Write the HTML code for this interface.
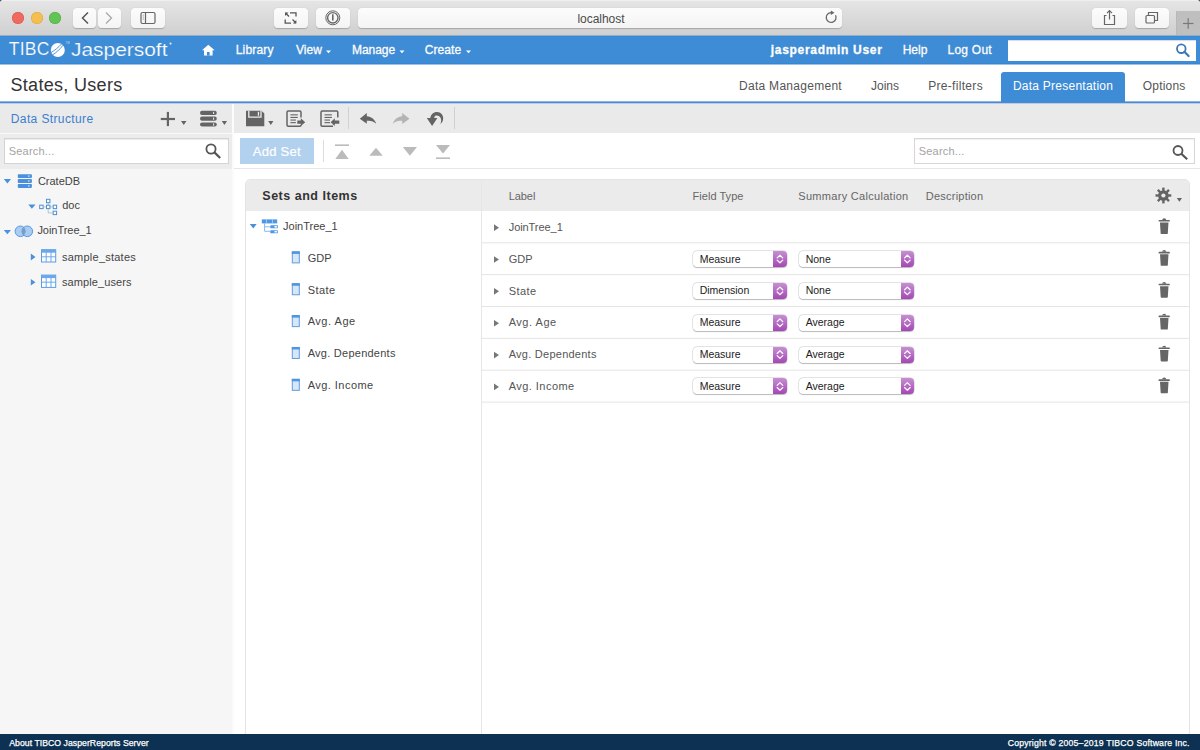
<!DOCTYPE html>
<html><head><meta charset="utf-8"><title>States, Users</title>
<style>
*{margin:0;padding:0;box-sizing:border-box}
html,body{width:1200px;height:750px;overflow:hidden;background:#fff;font-family:"Liberation Sans",sans-serif}
body{position:relative}
.a{position:absolute}
.t{position:absolute;white-space:nowrap;line-height:1}
svg{overflow:visible}
</style></head><body>
<div class="a" style="left:0;top:0;width:1200px;height:35px;background:linear-gradient(#efefef 0,#efefef 1px,#e5e5e5 1px,#d0d0d0 34px);"></div>
<div class="a" style="left:0;top:34px;width:1200px;height:1px;background:#d3d0cc"></div>
<div class="a" style="left:12px;top:12px;width:12px;height:12px;border-radius:50%;background:#ee6a5f;box-shadow:inset 0 0 0 0.5px #d9544a"></div>
<div class="a" style="left:30.5px;top:12px;width:12px;height:12px;border-radius:50%;background:#f5bf4f;box-shadow:inset 0 0 0 0.5px #dba440"></div>
<div class="a" style="left:49.3px;top:12px;width:12px;height:12px;border-radius:50%;background:#62c454;box-shadow:inset 0 0 0 0.5px #52a842"></div>
<div class="a" style="left:73px;top:8px;width:23px;height:20px;border-radius:4px;background:linear-gradient(#fcfcfc,#f4f4f4);box-shadow:0 0.5px 1px rgba(0,0,0,.22)"></div>
<div class="a" style="left:98px;top:8px;width:23px;height:20px;border-radius:4px;background:linear-gradient(#fcfcfc,#f4f4f4);box-shadow:0 0.5px 1px rgba(0,0,0,.22)"></div>
<div class="a" style="left:131px;top:8px;width:34px;height:20px;border-radius:4px;background:linear-gradient(#fcfcfc,#f4f4f4);box-shadow:0 0.5px 1px rgba(0,0,0,.22)"></div>
<div class="a" style="left:274px;top:8px;width:34px;height:20px;border-radius:4px;background:linear-gradient(#fcfcfc,#f4f4f4);box-shadow:0 0.5px 1px rgba(0,0,0,.22)"></div>
<div class="a" style="left:316px;top:8px;width:34px;height:20px;border-radius:4px;background:linear-gradient(#fcfcfc,#f4f4f4);box-shadow:0 0.5px 1px rgba(0,0,0,.22)"></div>
<div class="a" style="left:358px;top:8px;width:484px;height:20px;border-radius:4px;background:linear-gradient(#fcfcfc,#f4f4f4);box-shadow:0 0.5px 1px rgba(0,0,0,.22)"></div>
<div class="a" style="left:1092px;top:8px;width:35px;height:20px;border-radius:4px;background:linear-gradient(#fcfcfc,#f4f4f4);box-shadow:0 0.5px 1px rgba(0,0,0,.22)"></div>
<div class="a" style="left:1135px;top:8px;width:34px;height:20px;border-radius:4px;background:linear-gradient(#fcfcfc,#f4f4f4);box-shadow:0 0.5px 1px rgba(0,0,0,.22)"></div>
<div class="a" style="left:1176px;top:11px;width:24px;height:24px;background:#bfbfbf;border-left:1px solid #b8b8b8"></div>
<svg class="a" style="left:0;top:0" width="1200" height="35" viewBox="0 0 1200 35">
<polyline points="88,12.5 82.5,18 88,23.5" fill="none" stroke="#555" stroke-width="1.5"/>
<polyline points="106,12.5 111.5,18 106,23.5" fill="none" stroke="#a8a8a8" stroke-width="1.3"/>
<rect x="141" y="12.5" width="14" height="11" rx="1.5" fill="none" stroke="#666" stroke-width="1.2"/>
<line x1="145.5" y1="12.5" x2="145.5" y2="23.5" stroke="#666" stroke-width="1.2"/>
<circle cx="143.2" cy="15" r=".5" fill="#666"/><circle cx="143.2" cy="17" r=".5" fill="#666"/><circle cx="143.2" cy="19" r=".5" fill="#666"/>
<g stroke="#555" stroke-width="1.3" fill="none">
<polyline points="290,12.8 296,12.8 296,16.5"/><polyline points="285.2,19.5 285.2,23.2 291,23.2"/>
<line x1="285.5" y1="13" x2="289" y2="16.5"/><line x1="292.5" y1="19.5" x2="296" y2="23"/>
</g>
<polygon points="285,12.5 288.5,12.5 285,16" fill="#555"/><polygon points="296.3,23.5 292.8,23.5 296.3,20" fill="#555"/>
<circle cx="332.8" cy="17.8" r="7" fill="none" stroke="#666" stroke-width="1"/>
<circle cx="332.8" cy="17.8" r="5.2" fill="none" stroke="#666" stroke-width="1.4"/>
<line x1="332.8" y1="14.3" x2="332.8" y2="20.5" stroke="#666" stroke-width="1.6"/>
<path d="M835.5,15.2 A4.9,4.9 0 1 1 831,12.6" fill="none" stroke="#666" stroke-width="1.3"/>
<polygon points="830.8,10.6 834.5,12.8 830.8,15" fill="#666"/>
<g stroke="#666" stroke-width="1.2" fill="none">
<polyline points="1106.5,15.5 1104.5,15.5 1104.5,24.5 1114.5,24.5 1114.5,15.5 1112.5,15.5"/>
<line x1="1109.5" y1="11" x2="1109.5" y2="19.5"/>
<polyline points="1107,13.2 1109.5,10.7 1112,13.2"/>
<rect x="1146" y="15.5" width="8.5" height="7.5" rx="1"/>
<polyline points="1148.5,15.5 1148.5,12.5 1157.5,12.5 1157.5,20.5 1154.5,20.5"/>
<line x1="1183" y1="23.5" x2="1193.5" y2="23.5" stroke="#7a787a"/>
<line x1="1188.2" y1="18.2" x2="1188.2" y2="28.8" stroke="#7a787a"/>
</g>
<path d="M0,0 h2.6 a2.6,2.6 0 0 0 -2.6,2.6z" fill="#1b2b3b" opacity=".9"/>
<path d="M1200,0 h-2.6 a2.6,2.6 0 0 1 2.6,2.6z" fill="#1b2b3b" opacity=".9"/>
</svg>
<div class="a" style="left:0;top:35px;width:1200px;height:30px;background:linear-gradient(#93aecb 0,#93aecb 1px,#3489d8 1px,#3489d8 2px,#3e8cd6 2px,#3e8cd6 28px,#3487d4 28px,#3487d4 29px,#9cc2ea 29px)"></div>
<div class="a" style="left:1008px;top:40px;width:188px;height:21px;background:#fff;box-shadow:inset 0 1px 1px rgba(0,0,0,.15)"></div>
<svg class="a" style="left:0;top:35px" width="1200" height="30" viewBox="0 35 1200 30">
<circle cx="57.8" cy="50" r="7" fill="#fff"/>
<path d="M51,52.6 C54.5,50.5 58.5,47.5 61.8,43.6" fill="none" stroke="#3e8cd6" stroke-width=".9"/>
<path d="M52.3,55 C56,52.8 59.8,49.5 63.2,45" fill="none" stroke="#3e8cd6" stroke-width=".9"/>
<text x="65.8" y="44.3" font-size="2.6" fill="#fff" opacity=".7" font-family="Liberation Sans">TM</text>
<circle cx="170.6" cy="43.6" r="1.1" fill="#fff" opacity=".8"/>
<polygon points="208.3,44.8 202,50.2 204,50.2 204,55.6 212.6,55.6 212.6,50.2 214.6,50.2" fill="#fff"/>
<rect x="207" y="52" width="2.6" height="3.6" fill="#3e8cd6"/>
<polygon points="326,50.5 331,50.5 328.5,53.3" fill="#fff"/>
<polygon points="399.5,50.5 404.5,50.5 402,53.3" fill="#fff"/>
<polygon points="466,50.5 471,50.5 468.5,53.3" fill="#fff"/>
<circle cx="1181.3" cy="48.7" r="4.3" fill="none" stroke="#3b78b8" stroke-width="1.8"/>
<line x1="1184.4" y1="51.8" x2="1188.6" y2="56" stroke="#3b78b8" stroke-width="2.2" stroke-linecap="round"/>
</svg>
<div class="a" style="left:0;top:101px;width:1200px;height:3px;background:linear-gradient(#8db6e6 0,#8db6e6 1px,#4a8ad6 1px,#4a8ad6 2px,#bccbdd 2px)"></div>
<div class="a" style="left:1001px;top:71.5px;width:124px;height:30px;background:#3e8cd6;border-radius:3px 3px 0 0"></div>
<div class="a" style="left:0;top:104px;width:232px;height:29px;background:#eaeaea"></div>
<div class="a" style="left:0;top:133px;width:232px;height:1px;background:#fafafa"></div>
<div class="a" style="left:0;top:134px;width:232px;height:34.5px;background:#ececec"></div>
<div class="a" style="left:0;top:168.5px;width:232.5px;height:565px;background:#f6f6f6"></div>
<div class="a" style="left:232px;top:104px;width:2px;height:630px;background:#fbfbfb"></div>
<div class="a" style="left:4px;top:138px;width:224.5px;height:26px;background:#fff;border:1px solid #d4d4d4;box-shadow:inset 0 1px 1px rgba(0,0,0,.08)"></div>
<svg class="a" style="left:0;top:103px" width="232" height="200" viewBox="0 103 232 200">
<g fill="#646464">
<rect x="160.8" y="117.9" width="14.2" height="2.2"/>
<rect x="166.8" y="111.9" width="2.2" height="14.2"/>
<polygon points="181,121 186.5,121 183.75,125"/>
<polygon points="221.8,121 227,121 224.4,125"/>
<rect x="200" y="110.8" width="16.8" height="4.2" rx="2.1"/>
<rect x="200" y="116.6" width="16.8" height="4.2" rx="2.1"/>
<rect x="200" y="122.4" width="16.8" height="4.2" rx="2.1"/>
</g>
<g fill="#fff"><rect x="213.2" y="111.8" width=".9" height="2.2"/><rect x="213.2" y="117.6" width=".9" height="2.2"/><rect x="213.2" y="123.4" width=".9" height="2.2"/></g>
<circle cx="211" cy="149" r="4.6" fill="none" stroke="#555" stroke-width="1.8"/>
<line x1="214.4" y1="152.4" x2="220.2" y2="158" stroke="#555" stroke-width="2.2"/>
<g fill="#4a90dc">
<polygon points="3.8,179 11,179 7.4,183.4"/>
<polygon points="28.3,204.5 35.5,204.5 31.9,208.8"/>
<polygon points="3.8,230 11,230 7.4,234.2"/>
<polygon points="30.8,253.5 35.5,257 30.8,260.5"/>
<polygon points="30.8,279 35.5,282.3 30.8,285.6"/>
<rect x="17.8" y="174.2" width="14.1" height="3.9" rx=".8"/>
<rect x="17.8" y="179.1" width="14.1" height="3.9" rx=".8"/>
<rect x="17.8" y="184" width="14.1" height="3.9" rx=".8"/>
</g>
<g fill="#fff"><rect x="28.5" y="175.2" width=".8" height="1.8"/><rect x="28.5" y="180.1" width=".8" height="1.8"/><rect x="28.5" y="185" width=".8" height="1.8"/></g>
<g fill="#fff" stroke="#4a90dc" stroke-width="1">
<rect x="46.5" y="199.3" width="3.4" height="3.4"/>
<rect x="39.7" y="205.2" width="3.4" height="3.4"/>
<rect x="46.5" y="205.2" width="3.4" height="3.4"/>
<rect x="53.2" y="205.2" width="3.4" height="3.4"/>
<rect x="53.2" y="211.2" width="3.4" height="3.4"/>
</g>
<g stroke="#8aa" stroke-width=".6" fill="none"><line x1="43.1" y1="206.9" x2="46.5" y2="206.9"/><line x1="49.9" y1="206.9" x2="53.2" y2="206.9"/><polyline points="48.2,208.6 48.2,212.9 53.2,212.9"/><line x1="48.2" y1="202.7" x2="48.2" y2="205.2"/></g>
<circle cx="20.4" cy="231.3" r="5.3" fill="#a9ccf3" stroke="#4a90dc" stroke-width=".9"/>
<circle cx="27.3" cy="231.3" r="5.3" fill="#a9ccf3" stroke="#4a90dc" stroke-width=".9"/>
<path d="M23.85,227.3 A5.3,5.3 0 0 1 23.85,235.3 A5.3,5.3 0 0 1 23.85,227.3z" fill="#7f9cbf"/>
<rect x="41.5" y="249.7" width="14.2" height="12.3" fill="#fff" stroke="#5b9ce2" stroke-width="1"/>
<rect x="41.5" y="249.7" width="14.2" height="3" fill="#6aa8ea"/>
<g stroke="#6aa8ea" stroke-width="1"><line x1="46.2" y1="249.7" x2="46.2" y2="262.0"/><line x1="51" y1="249.7" x2="51" y2="262.0"/><line x1="41.5" y1="256.8" x2="55.7" y2="256.8"/></g>
<rect x="41.5" y="275.1" width="14.2" height="12.3" fill="#fff" stroke="#5b9ce2" stroke-width="1"/>
<rect x="41.5" y="275.1" width="14.2" height="3" fill="#6aa8ea"/>
<g stroke="#6aa8ea" stroke-width="1"><line x1="46.2" y1="275.1" x2="46.2" y2="287.40000000000003"/><line x1="51" y1="275.1" x2="51" y2="287.40000000000003"/><line x1="41.5" y1="282.20000000000005" x2="55.7" y2="282.20000000000005"/></g>
</svg>
<div class="a" style="left:234px;top:104px;width:966px;height:28.5px;background:#eaeaea"></div>
<div class="a" style="left:234px;top:168px;width:966px;height:1px;background:#e6e6e6"></div>
<div class="a" style="left:239.6px;top:138px;width:74.4px;height:25.8px;background:#b2d1ee"></div>
<div class="a" style="left:323px;top:140px;width:1px;height:22px;background:#dcdcdc"></div>
<div class="a" style="left:913.7px;top:138.2px;width:281.3px;height:25.5px;background:#fff;border:1px solid #d6d6d6;box-shadow:inset 0 1px 1px rgba(0,0,0,.06)"></div>
<svg class="a" style="left:234px;top:103px" width="966" height="66" viewBox="234 103 966 66">
<path d="M246,110.8 H261.5 L264.3,113.6 V126.3 H246Z" fill="#646464"/>
<path d="M248.8,110.8 V117.2 H261 V110.8" fill="none" stroke="#ebebeb" stroke-width="1.3"/>
<rect x="257.8" y="111.8" width="1.3" height="4" fill="#ebebeb"/>
<polygon points="268.2,121 273.4,121 270.8,125" fill="#646464"/>
<g fill="none" stroke="#646464" stroke-width="1.5">
<path d="M301,117.5 V112.2 Q301,111 299.8,111 H288.2 Q287,111 287,112.2 V125.1 Q287,126.3 288.2,126.3 H299.8 Q301,126.3 301,125.1 V125"/>
<path d="M337.8,117.5 V112.2 Q337.8,111 336.6,111 H322.2 Q321,111 321,112.2 V125.1 Q321,126.3 322.2,126.3 H333"/>
</g>
<g fill="#646464">
<rect x="290.4" y="114.3" width="7.4" height="1.1"/><rect x="290.4" y="116.9" width="7.4" height="1.1"/><rect x="290.4" y="119.5" width="5.5" height="1.1"/><rect x="290.4" y="122.1" width="5.5" height="1.1"/>
<polygon points="297.3,120.5 300.8,120.5 300.8,118.2 305.2,122.2 300.8,126.1 300.8,123.8 297.3,123.8"/>
<rect x="324.5" y="114.3" width="7.4" height="1.1"/><rect x="324.5" y="116.9" width="7.4" height="1.1"/><rect x="324.5" y="119.5" width="5.5" height="1.1"/><rect x="324.5" y="122.1" width="5.5" height="1.1"/>
<polygon points="339.3,120.5 334.8,120.5 334.8,118.2 330.6,122.2 334.8,126.1 334.8,123.8 339.3,123.8"/>
</g>
<rect x="348" y="107" width="1" height="22" fill="#d0d0d0"/>
<rect x="454" y="107" width="1" height="22" fill="#d0d0d0"/>
<path d="M359.8,118.7 L366.8,113 V116.2 C371.5,116.5 375,119.5 376.2,123.8 C373.5,121 370.5,120.3 366.8,120.8 V123.8 Z" fill="#646464"/>
<path d="M409.5,118.7 L402.2,113 V116.2 C397.5,116.5 394,119.5 392.8,124 C395.5,121 398.5,120.3 402.2,120.8 V124 Z" fill="#b4b4b4"/>
<path d="M430.3,118.3 C430.5,114.5 433.5,112 437,112 C441,112 443.3,115 443.2,118.5 C443.1,121 442,122.8 440.3,124 C441.3,122 441.5,119.5 440.4,117.5 C439.3,115.6 437,115 435.3,115.8 C434.5,116.3 434.3,117.3 434.4,118.3 Z M426.8,118.1 L437.4,118.1 L432.1,126.1 Z" fill="#646464"/>
<g fill="#bbb">
<rect x="335" y="144.4" width="14" height="1.6"/><polygon points="335.3,159 348.7,159 342,149.8"/>
<polygon points="369.3,155.8 382.8,155.8 376,147.7"/>
<polygon points="402.8,147 417,147 409.9,155.8"/>
<polygon points="436,145 450,145 443,153.6"/><rect x="436" y="157.4" width="14" height="1.6"/>
</g>
<circle cx="1178" cy="150.5" r="4.5" fill="none" stroke="#555" stroke-width="1.8"/>
<line x1="1181.3" y1="153.8" x2="1187.2" y2="159.3" stroke="#555" stroke-width="2.2"/>
</svg>
<div class="a" style="left:245px;top:179px;width:945px;height:600px;background:#fff;border:1px solid #e4e4e4;border-radius:5px 5px 0 0;overflow:hidden"><div style="height:31px;background:#ebebeb"></div></div>
<div class="a" style="left:481px;top:179px;width:1px;height:560px;background:#e6e6e6"></div>
<svg class="a" style="left:481px;top:241px" width="709" height="4" viewBox="0 241 709 4"><rect x="0" y="242.30" width="709" height="1" fill="#e4e4e4"/></svg>
<svg class="a" style="left:481px;top:273px" width="709" height="4" viewBox="0 273 709 4"><rect x="0" y="274.16" width="709" height="1" fill="#e4e4e4"/></svg>
<svg class="a" style="left:481px;top:305px" width="709" height="4" viewBox="0 305 709 4"><rect x="0" y="306.02" width="709" height="1" fill="#e4e4e4"/></svg>
<svg class="a" style="left:481px;top:336px" width="709" height="4" viewBox="0 336 709 4"><rect x="0" y="337.88" width="709" height="1" fill="#e4e4e4"/></svg>
<svg class="a" style="left:481px;top:368px" width="709" height="4" viewBox="0 368 709 4"><rect x="0" y="369.74" width="709" height="1" fill="#e4e4e4"/></svg>
<svg class="a" style="left:481px;top:400px" width="709" height="4" viewBox="0 400 709 4"><rect x="0" y="401.60" width="709" height="1" fill="#e4e4e4"/></svg>
<div class="a" style="left:693px;top:251.0px;width:93.60000000000002px;height:16px;border-radius:4px;background:#fff;box-shadow:0 0 0 .5px rgba(0,0,0,.18),0 .8px 1px rgba(0,0,0,.2)"></div>
<div class="a" style="left:773.3000000000001px;top:251.0px;width:13.3px;height:16px;border-radius:0 4px 4px 0;background:linear-gradient(#c68fd2,#a447b4)"></div>
<div class="a" style="left:799px;top:251.0px;width:115px;height:16px;border-radius:4px;background:#fff;box-shadow:0 0 0 .5px rgba(0,0,0,.18),0 .8px 1px rgba(0,0,0,.2)"></div>
<div class="a" style="left:900.7px;top:251.0px;width:13.3px;height:16px;border-radius:0 4px 4px 0;background:linear-gradient(#c68fd2,#a447b4)"></div>
<div class="a" style="left:693px;top:282.86px;width:93.60000000000002px;height:16px;border-radius:4px;background:#fff;box-shadow:0 0 0 .5px rgba(0,0,0,.18),0 .8px 1px rgba(0,0,0,.2)"></div>
<div class="a" style="left:773.3000000000001px;top:282.86px;width:13.3px;height:16px;border-radius:0 4px 4px 0;background:linear-gradient(#c68fd2,#a447b4)"></div>
<div class="a" style="left:799px;top:282.86px;width:115px;height:16px;border-radius:4px;background:#fff;box-shadow:0 0 0 .5px rgba(0,0,0,.18),0 .8px 1px rgba(0,0,0,.2)"></div>
<div class="a" style="left:900.7px;top:282.86px;width:13.3px;height:16px;border-radius:0 4px 4px 0;background:linear-gradient(#c68fd2,#a447b4)"></div>
<div class="a" style="left:693px;top:314.72px;width:93.60000000000002px;height:16px;border-radius:4px;background:#fff;box-shadow:0 0 0 .5px rgba(0,0,0,.18),0 .8px 1px rgba(0,0,0,.2)"></div>
<div class="a" style="left:773.3000000000001px;top:314.72px;width:13.3px;height:16px;border-radius:0 4px 4px 0;background:linear-gradient(#c68fd2,#a447b4)"></div>
<div class="a" style="left:799px;top:314.72px;width:115px;height:16px;border-radius:4px;background:#fff;box-shadow:0 0 0 .5px rgba(0,0,0,.18),0 .8px 1px rgba(0,0,0,.2)"></div>
<div class="a" style="left:900.7px;top:314.72px;width:13.3px;height:16px;border-radius:0 4px 4px 0;background:linear-gradient(#c68fd2,#a447b4)"></div>
<div class="a" style="left:693px;top:346.58px;width:93.60000000000002px;height:16px;border-radius:4px;background:#fff;box-shadow:0 0 0 .5px rgba(0,0,0,.18),0 .8px 1px rgba(0,0,0,.2)"></div>
<div class="a" style="left:773.3000000000001px;top:346.58px;width:13.3px;height:16px;border-radius:0 4px 4px 0;background:linear-gradient(#c68fd2,#a447b4)"></div>
<div class="a" style="left:799px;top:346.58px;width:115px;height:16px;border-radius:4px;background:#fff;box-shadow:0 0 0 .5px rgba(0,0,0,.18),0 .8px 1px rgba(0,0,0,.2)"></div>
<div class="a" style="left:900.7px;top:346.58px;width:13.3px;height:16px;border-radius:0 4px 4px 0;background:linear-gradient(#c68fd2,#a447b4)"></div>
<div class="a" style="left:693px;top:378.44px;width:93.60000000000002px;height:16px;border-radius:4px;background:#fff;box-shadow:0 0 0 .5px rgba(0,0,0,.18),0 .8px 1px rgba(0,0,0,.2)"></div>
<div class="a" style="left:773.3000000000001px;top:378.44px;width:13.3px;height:16px;border-radius:0 4px 4px 0;background:linear-gradient(#c68fd2,#a447b4)"></div>
<div class="a" style="left:799px;top:378.44px;width:115px;height:16px;border-radius:4px;background:#fff;box-shadow:0 0 0 .5px rgba(0,0,0,.18),0 .8px 1px rgba(0,0,0,.2)"></div>
<div class="a" style="left:900.7px;top:378.44px;width:13.3px;height:16px;border-radius:0 4px 4px 0;background:linear-gradient(#c68fd2,#a447b4)"></div>
<svg class="a" style="left:245px;top:179px" width="945" height="240" viewBox="245 179 945 240"><polygon points="249.8,224 256.7,224 253.25,228.6" fill="#4a90dc"/><rect x="261.8" y="219.4" width="15.4" height="4" fill="#4c97e6"/>
<rect x="266" y="219.4" width=".7" height="4" fill="#bcd8f5"/><rect x="272.2" y="219.4" width=".7" height="4" fill="#bcd8f5"/>
<path d="M264.6,223.4 V231.3 H270.3 M264.6,226.8 H270.3" fill="none" stroke="#7fb0ea" stroke-width=".9"/>
<rect x="270.3" y="225.3" width="7.5" height="3" rx=".5" fill="#4c97e6"/><rect x="274.5" y="226" width="2.4" height="1.6" fill="#fff"/>
<rect x="270.3" y="230.2" width="7.5" height="3" rx=".5" fill="#4c97e6"/><rect x="274.5" y="230.9" width="2.4" height="1.6" fill="#fff"/><rect x="292.3" y="251.9" width="7" height="11" fill="#d8e7f7" stroke="#5d9de2" stroke-width="1"/><rect x="291.8" y="251.4" width="8" height="2.5" fill="#4f95e0"/><rect x="292.3" y="283.76" width="7" height="11" fill="#d8e7f7" stroke="#5d9de2" stroke-width="1"/><rect x="291.8" y="283.26" width="8" height="2.5" fill="#4f95e0"/><rect x="292.3" y="315.62" width="7" height="11" fill="#d8e7f7" stroke="#5d9de2" stroke-width="1"/><rect x="291.8" y="315.12" width="8" height="2.5" fill="#4f95e0"/><rect x="292.3" y="347.48" width="7" height="11" fill="#d8e7f7" stroke="#5d9de2" stroke-width="1"/><rect x="291.8" y="346.98" width="8" height="2.5" fill="#4f95e0"/><rect x="292.3" y="379.34000000000003" width="7" height="11" fill="#d8e7f7" stroke="#5d9de2" stroke-width="1"/><rect x="291.8" y="378.84000000000003" width="8" height="2.5" fill="#4f95e0"/><polygon points="494,224.3 499,227.65 494,231.0" fill="#777"/><g fill="#666"><path d="M1160,222.5 H1168.5 L1167.8,233.39999999999998 Q1167.7,234.0 1167,234.0 H1161.5 Q1160.8,234.0 1160.7,233.39999999999998 Z"/>
<rect x="1158.6" y="220.0" width="11.2" height="1.6" rx=".5"/><path d="M1162.2,220.0 Q1162.2,218.2 1164.2,218.2 Q1166.2,218.2 1166.2,220.0Z"/></g><polygon points="494,256.16 499,259.51000000000005 494,262.86" fill="#777"/><g fill="#666"><path d="M1160,254.36 H1168.5 L1167.8,265.26 Q1167.7,265.86 1167,265.86 H1161.5 Q1160.8,265.86 1160.7,265.26 Z"/>
<rect x="1158.6" y="251.86" width="11.2" height="1.6" rx=".5"/><path d="M1162.2,251.86 Q1162.2,250.06 1164.2,250.06 Q1166.2,250.06 1166.2,251.86Z"/></g><polygon points="494,288.02 499,291.37 494,294.71999999999997" fill="#777"/><g fill="#666"><path d="M1160,286.21999999999997 H1168.5 L1167.8,297.11999999999995 Q1167.7,297.71999999999997 1167,297.71999999999997 H1161.5 Q1160.8,297.71999999999997 1160.7,297.11999999999995 Z"/>
<rect x="1158.6" y="283.71999999999997" width="11.2" height="1.6" rx=".5"/><path d="M1162.2,283.71999999999997 Q1162.2,281.91999999999996 1164.2,281.91999999999996 Q1166.2,281.91999999999996 1166.2,283.71999999999997Z"/></g><polygon points="494,319.88 499,323.23 494,326.58" fill="#777"/><g fill="#666"><path d="M1160,318.08 H1168.5 L1167.8,328.97999999999996 Q1167.7,329.58 1167,329.58 H1161.5 Q1160.8,329.58 1160.7,328.97999999999996 Z"/>
<rect x="1158.6" y="315.58" width="11.2" height="1.6" rx=".5"/><path d="M1162.2,315.58 Q1162.2,313.78 1164.2,313.78 Q1166.2,313.78 1166.2,315.58Z"/></g><polygon points="494,351.74 499,355.09000000000003 494,358.44" fill="#777"/><g fill="#666"><path d="M1160,349.94 H1168.5 L1167.8,360.84 Q1167.7,361.44 1167,361.44 H1161.5 Q1160.8,361.44 1160.7,360.84 Z"/>
<rect x="1158.6" y="347.44" width="11.2" height="1.6" rx=".5"/><path d="M1162.2,347.44 Q1162.2,345.64 1164.2,345.64 Q1166.2,345.64 1166.2,347.44Z"/></g><polygon points="494,383.6 499,386.95000000000005 494,390.3" fill="#777"/><g fill="#666"><path d="M1160,381.8 H1168.5 L1167.8,392.7 Q1167.7,393.3 1167,393.3 H1161.5 Q1160.8,393.3 1160.7,392.7 Z"/>
<rect x="1158.6" y="379.3" width="11.2" height="1.6" rx=".5"/><path d="M1162.2,379.3 Q1162.2,377.5 1164.2,377.5 Q1166.2,377.5 1166.2,379.3Z"/></g><g fill="none" stroke="#fff" stroke-width="1.2" stroke-linecap="round" stroke-linejoin="round"><polyline points="777.1500000000001,257.9 779.95,255.2 782.75,257.9"/><polyline points="777.1500000000001,260.1 779.95,262.8 782.75,260.1"/></g><g fill="none" stroke="#fff" stroke-width="1.2" stroke-linecap="round" stroke-linejoin="round"><polyline points="904.5500000000001,257.9 907.35,255.2 910.15,257.9"/><polyline points="904.5500000000001,260.1 907.35,262.8 910.15,260.1"/></g><g fill="none" stroke="#fff" stroke-width="1.2" stroke-linecap="round" stroke-linejoin="round"><polyline points="777.1500000000001,289.76 779.95,287.06 782.75,289.76"/><polyline points="777.1500000000001,291.96000000000004 779.95,294.66 782.75,291.96000000000004"/></g><g fill="none" stroke="#fff" stroke-width="1.2" stroke-linecap="round" stroke-linejoin="round"><polyline points="904.5500000000001,289.76 907.35,287.06 910.15,289.76"/><polyline points="904.5500000000001,291.96000000000004 907.35,294.66 910.15,291.96000000000004"/></g><g fill="none" stroke="#fff" stroke-width="1.2" stroke-linecap="round" stroke-linejoin="round"><polyline points="777.1500000000001,321.62 779.95,318.92 782.75,321.62"/><polyline points="777.1500000000001,323.82000000000005 779.95,326.52000000000004 782.75,323.82000000000005"/></g><g fill="none" stroke="#fff" stroke-width="1.2" stroke-linecap="round" stroke-linejoin="round"><polyline points="904.5500000000001,321.62 907.35,318.92 910.15,321.62"/><polyline points="904.5500000000001,323.82000000000005 907.35,326.52000000000004 910.15,323.82000000000005"/></g><g fill="none" stroke="#fff" stroke-width="1.2" stroke-linecap="round" stroke-linejoin="round"><polyline points="777.1500000000001,353.47999999999996 779.95,350.78 782.75,353.47999999999996"/><polyline points="777.1500000000001,355.68 779.95,358.38 782.75,355.68"/></g><g fill="none" stroke="#fff" stroke-width="1.2" stroke-linecap="round" stroke-linejoin="round"><polyline points="904.5500000000001,353.47999999999996 907.35,350.78 910.15,353.47999999999996"/><polyline points="904.5500000000001,355.68 907.35,358.38 910.15,355.68"/></g><g fill="none" stroke="#fff" stroke-width="1.2" stroke-linecap="round" stroke-linejoin="round"><polyline points="777.1500000000001,385.34 779.95,382.64 782.75,385.34"/><polyline points="777.1500000000001,387.54 779.95,390.24 782.75,387.54"/></g><g fill="none" stroke="#fff" stroke-width="1.2" stroke-linecap="round" stroke-linejoin="round"><polyline points="904.5500000000001,385.34 907.35,382.64 910.15,385.34"/><polyline points="904.5500000000001,387.54 907.35,390.24 910.15,387.54"/></g><circle cx="1163.4" cy="195.5" r="5.3" fill="#646464"/><rect x="1162.2" y="187.6" width="2.4" height="4" fill="#646464" transform="rotate(0 1163.4 195.5)"/><rect x="1162.2" y="187.6" width="2.4" height="4" fill="#646464" transform="rotate(45 1163.4 195.5)"/><rect x="1162.2" y="187.6" width="2.4" height="4" fill="#646464" transform="rotate(90 1163.4 195.5)"/><rect x="1162.2" y="187.6" width="2.4" height="4" fill="#646464" transform="rotate(135 1163.4 195.5)"/><rect x="1162.2" y="187.6" width="2.4" height="4" fill="#646464" transform="rotate(180 1163.4 195.5)"/><rect x="1162.2" y="187.6" width="2.4" height="4" fill="#646464" transform="rotate(225 1163.4 195.5)"/><rect x="1162.2" y="187.6" width="2.4" height="4" fill="#646464" transform="rotate(270 1163.4 195.5)"/><rect x="1162.2" y="187.6" width="2.4" height="4" fill="#646464" transform="rotate(315 1163.4 195.5)"/><circle cx="1163.4" cy="195.5" r="2.1" fill="#ebebeb"/><polygon points="1176.8,198 1182,198 1179.4,201.8" fill="#646464"/></svg>
<div class="a" style="left:0;top:733.5px;width:1200px;height:17px;background:#0c3152"></div>
<div class="t" style="left:577.50px;top:12.59px;font-size:12px;font-weight:400;color:#4a4a4a;letter-spacing:-0.042px;">localhost</div>
<div class="t" style="left:8.70px;top:41.39px;font-size:17.5px;font-weight:400;color:#fff;letter-spacing:0.281px;-webkit-text-stroke:.2px #3e8cd6;">TIBC</div>
<div class="t" style="left:70.50px;top:40.54px;font-size:18.5px;font-weight:400;color:#fff;transform-origin:0 0;transform:scaleX(1.1305);-webkit-text-stroke:.2px #3e8cd6;">Jaspersoft</div>
<div class="t" style="left:235.70px;top:44.09px;font-size:12px;font-weight:400;color:#fff;letter-spacing:0.188px;-webkit-text-stroke:.3px #fff;text-shadow:0 -0.5px 0 rgba(0,0,0,.2);">Library</div>
<div class="t" style="left:296.00px;top:44.09px;font-size:12px;font-weight:400;color:#fff;letter-spacing:0.051px;-webkit-text-stroke:.3px #fff;text-shadow:0 -0.5px 0 rgba(0,0,0,.2);">View</div>
<div class="t" style="left:352.00px;top:44.09px;font-size:12px;font-weight:400;color:#fff;letter-spacing:-0.062px;-webkit-text-stroke:.3px #fff;text-shadow:0 -0.5px 0 rgba(0,0,0,.2);">Manage</div>
<div class="t" style="left:424.80px;top:44.09px;font-size:12px;font-weight:400;color:#fff;letter-spacing:0.078px;-webkit-text-stroke:.3px #fff;text-shadow:0 -0.5px 0 rgba(0,0,0,.2);">Create</div>
<div class="t" style="left:902.70px;top:44.09px;font-size:12px;font-weight:400;color:#fff;letter-spacing:-0.022px;-webkit-text-stroke:.3px #fff;text-shadow:0 -0.5px 0 rgba(0,0,0,.2);">Help</div>
<div class="t" style="left:947.50px;top:44.09px;font-size:12px;font-weight:400;color:#fff;letter-spacing:0.242px;-webkit-text-stroke:.3px #fff;text-shadow:0 -0.5px 0 rgba(0,0,0,.2);">Log Out</div>
<div class="t" style="left:770.80px;top:44.09px;font-size:12px;font-weight:700;color:#fff;letter-spacing:0.686px;-webkit-text-stroke:.3px #fff;text-shadow:0 -0.5px 0 rgba(0,0,0,.2);">jasperadmin User</div>
<div class="t" style="left:10.50px;top:75.66px;font-size:18px;font-weight:400;color:#333;letter-spacing:0.304px;">States, Users</div>
<div class="t" style="left:739.00px;top:79.84px;font-size:12px;font-weight:400;color:#555;letter-spacing:0.284px;">Data Management</div>
<div class="t" style="left:871.00px;top:79.84px;font-size:12px;font-weight:400;color:#555;letter-spacing:-0.003px;">Joins</div>
<div class="t" style="left:928.20px;top:79.84px;font-size:12px;font-weight:400;color:#555;letter-spacing:0.314px;">Pre-filters</div>
<div class="t" style="left:1142.80px;top:79.84px;font-size:12px;font-weight:400;color:#555;letter-spacing:0.192px;">Options</div>
<div class="t" style="left:1012.90px;top:79.84px;font-size:12px;font-weight:400;color:#fff;letter-spacing:0.249px;">Data Presentation</div>
<div class="t" style="left:10.80px;top:112.64px;font-size:12px;font-weight:400;color:#3a80cf;letter-spacing:0.380px;">Data Structure</div>
<div class="t" style="left:8.80px;top:146.19px;font-size:11px;font-weight:400;color:#a3a3a3;letter-spacing:0.185px;">Search...</div>
<div class="t" style="left:37.90px;top:175.79px;font-size:11px;font-weight:400;color:#444;letter-spacing:0.002px;">CrateDB</div>
<div class="t" style="left:62.20px;top:200.39px;font-size:11px;font-weight:400;color:#444;letter-spacing:0.050px;">doc</div>
<div class="t" style="left:37.40px;top:225.39px;font-size:11px;font-weight:400;color:#444;letter-spacing:-0.033px;">JoinTree_1</div>
<div class="t" style="left:62.00px;top:251.69px;font-size:11px;font-weight:400;color:#444;letter-spacing:0.236px;">sample_states</div>
<div class="t" style="left:62.00px;top:276.69px;font-size:11px;font-weight:400;color:#444;letter-spacing:0.085px;">sample_users</div>
<div class="t" style="left:252.80px;top:144.50px;font-size:13px;font-weight:400;color:#fff;letter-spacing:0.248px;-webkit-text-stroke:.2px #fff;">Add Set</div>
<div class="t" style="left:918.80px;top:146.19px;font-size:11px;font-weight:400;color:#a3a3a3;letter-spacing:0.185px;">Search...</div>
<div class="t" style="left:262.30px;top:190.12px;font-size:12.5px;font-weight:700;color:#333;letter-spacing:0.512px;">Sets and Items</div>
<div class="t" style="left:508.70px;top:190.69px;font-size:11px;font-weight:400;color:#666;letter-spacing:-0.064px;">Label</div>
<div class="t" style="left:692.50px;top:190.69px;font-size:11px;font-weight:400;color:#666;letter-spacing:0.044px;">Field Type</div>
<div class="t" style="left:798.30px;top:190.69px;font-size:11px;font-weight:400;color:#666;letter-spacing:0.298px;">Summary Calculation</div>
<div class="t" style="left:925.80px;top:190.69px;font-size:11px;font-weight:400;color:#666;letter-spacing:0.224px;">Description</div>
<div class="t" style="left:283.00px;top:221.19px;font-size:11px;font-weight:400;color:#444;letter-spacing:0.008px;">JoinTree_1</div>
<div class="t" style="left:508.70px;top:222.19px;font-size:11px;font-weight:400;color:#555;letter-spacing:-0.062px;">JoinTree_1</div>
<div class="t" style="left:307.70px;top:253.00px;font-size:11px;font-weight:400;color:#444;letter-spacing:0.052px;">GDP</div>
<div class="t" style="left:508.70px;top:254.00px;font-size:11px;font-weight:400;color:#555;letter-spacing:0.052px;">GDP</div>
<div class="t" style="left:699.70px;top:253.51px;font-size:10.5px;font-weight:400;color:#222;letter-spacing:0.000px;">Measure</div>
<div class="t" style="left:805.70px;top:253.51px;font-size:10.5px;font-weight:400;color:#222;letter-spacing:0.000px;">None</div>
<div class="t" style="left:307.70px;top:285.00px;font-size:11px;font-weight:400;color:#444;letter-spacing:0.463px;">State</div>
<div class="t" style="left:508.70px;top:286.00px;font-size:11px;font-weight:400;color:#555;letter-spacing:0.463px;">State</div>
<div class="t" style="left:699.70px;top:285.37px;font-size:10.5px;font-weight:400;color:#222;letter-spacing:0.000px;">Dimension</div>
<div class="t" style="left:805.70px;top:285.37px;font-size:10.5px;font-weight:400;color:#222;letter-spacing:0.000px;">None</div>
<div class="t" style="left:307.70px;top:316.00px;font-size:11px;font-weight:400;color:#444;letter-spacing:0.520px;">Avg. Age</div>
<div class="t" style="left:508.70px;top:317.00px;font-size:11px;font-weight:400;color:#555;letter-spacing:0.520px;">Avg. Age</div>
<div class="t" style="left:699.70px;top:317.23px;font-size:10.5px;font-weight:400;color:#222;letter-spacing:0.000px;">Measure</div>
<div class="t" style="left:805.70px;top:317.23px;font-size:10.5px;font-weight:400;color:#222;letter-spacing:0.000px;">Average</div>
<div class="t" style="left:307.70px;top:348.00px;font-size:11px;font-weight:400;color:#444;letter-spacing:0.253px;">Avg. Dependents</div>
<div class="t" style="left:508.70px;top:349.00px;font-size:11px;font-weight:400;color:#555;letter-spacing:0.253px;">Avg. Dependents</div>
<div class="t" style="left:699.70px;top:349.09px;font-size:10.5px;font-weight:400;color:#222;letter-spacing:0.000px;">Measure</div>
<div class="t" style="left:805.70px;top:349.09px;font-size:10.5px;font-weight:400;color:#222;letter-spacing:0.000px;">Average</div>
<div class="t" style="left:307.70px;top:380.00px;font-size:11px;font-weight:400;color:#444;letter-spacing:0.459px;">Avg. Income</div>
<div class="t" style="left:508.70px;top:381.00px;font-size:11px;font-weight:400;color:#555;letter-spacing:0.459px;">Avg. Income</div>
<div class="t" style="left:699.70px;top:380.95px;font-size:10.5px;font-weight:400;color:#222;letter-spacing:0.000px;">Measure</div>
<div class="t" style="left:805.70px;top:380.95px;font-size:10.5px;font-weight:400;color:#222;letter-spacing:0.000px;">Average</div>
<div class="t" style="left:9.30px;top:739.14px;font-size:8.7px;font-weight:400;color:#fff;letter-spacing:0.031px;-webkit-text-stroke:.25px #fff;">About TIBCO JasperReports Server</div>
<div class="t" style="left:1007.70px;top:739.14px;font-size:8.7px;font-weight:400;color:#fff;letter-spacing:0.200px;-webkit-text-stroke:.25px #fff;">Copyright © 2005–2019 TIBCO Software Inc.</div>
</body></html>
